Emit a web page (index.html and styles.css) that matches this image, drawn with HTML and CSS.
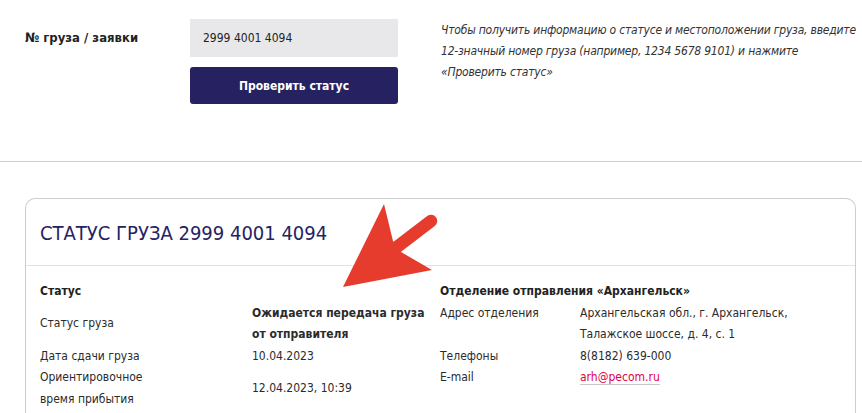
FILE: index.html
```html
<!DOCTYPE html>
<html lang="ru">
<head>
<meta charset="utf-8">
<link rel="stylesheet" href="styles.css">
</head>
<body>
<section class="search">
  <div class="search-label">№ груза / заявки</div>
  <div class="search-form">
    <div class="search-input">2999 4001 4094</div>
    <button class="search-btn">Проверить статус</button>
  </div>
  <p class="search-help">Чтобы получить информацию о статусе и местоположении груза, введите 12-значный номер груза (например, 1234 5678 9101) и нажмите «Проверить статус»</p>
</section>
<hr class="divider">
<section class="card">
  <h2 class="card-title">СТАТУС ГРУЗА 2999 4001 4094</h2>
  <div class="card-body">
    <div class="col col-status">
      <div class="col-head">Статус</div>
      <div class="row"><div class="key">Статус груза</div><div class="val val-bold">Ожидается передача груза от отправителя</div></div>
      <div class="row"><div class="key">Дата сдачи груза</div><div class="val">10.04.2023</div></div>
      <div class="row"><div class="key"><span class="key-text">Ориентировочное время прибытия</span></div><div class="val">12.04.2023, 10:39</div></div>
    </div>
    <div class="col col-office">
      <div class="col-head">Отделение отправления «Архангельск»</div>
      <div class="row"><div class="key">Адрес отделения</div><div class="val">Архангельская обл., г. Архангельск, Талажское шоссе, д. 4, с. 1</div></div>
      <div class="row"><div class="key">Телефоны</div><div class="val">8(8182) 639-000</div></div>
      <div class="row"><div class="key">E-mail</div><div class="val"><a class="mail" href="#">arh@pecom.ru</a></div></div>
    </div>
  </div>
  <svg class="arrow" width="120" height="100" viewBox="0 0 120 100">
    <path d="M110 20 L72 49" stroke="#e53c2e" stroke-width="12.5" stroke-linecap="round"/>
    <polygon points="63,3 72,40 80,51 111,69 22,86" fill="#e53c2e"/>
  </svg>
</section>
</body>
</html>
```

FILE: styles.css
```css
html, body { margin: 0; padding: 0; background: #fff; }
body {
  font-family: "DejaVu Sans Condensed", "DejaVu Sans", sans-serif;
  font-size: 12px;
  color: #2b2b2b;
  width: 862px;
  height: 413px;
  overflow: hidden;
}
.search {
  display: flex;
  padding: 19px 0 0 25px;
  box-sizing: border-box;
  height: 161px;
}
.search-label {
  width: 165px;
  font-weight: bold;
  font-size: 13px;
  line-height: 38px;
  color: #222;
}
.search-form {
  width: 208px;
  display: flex;
  flex-direction: column;
  gap: 10px;
}
.search-input {
  height: 38px;
  line-height: 38px;
  background: #e8e8ea;
  padding-left: 13px;
  font-size: 12px;
  color: #222;
}
.search-btn {
  height: 37px;
  border: 0;
  border-radius: 3px;
  background: #262262;
  color: #fff;
  font-family: inherit;
  font-weight: bold;
  font-size: 12px;
  padding: 0;
}
.search-help {
  margin: 0 0 0 43px;
  padding-top: 1px;
  width: 421px;
  font-style: italic;
  font-size: 12px;
  letter-spacing: -0.2px;
  line-height: 21px;
  color: #333;
}
.divider {
  margin: 0;
  border: 0;
  border-top: 1px solid #cdcdcd;
}
.card {
  position: relative;
  margin: 36px 6px 0 25px;
  border: 1px solid #cdcdcd;
  border-bottom: 0;
  border-radius: 10px 10px 0 0;
  height: 220px;
}
.card-title {
  margin: 0;
  padding: 0 14px;
  height: 66px;
  line-height: 68px;
  font-weight: normal;
  font-size: 20px;
  color: #262262;
  border-bottom: 1px solid #e3e3e3;
}
.card-body {
  display: flex;
  padding: 15px 14px 0;
}
.col-head {
  font-weight: bold;
  line-height: 21.6px;
  font-size: 12px;
  color: #222;
}
.row { display: flex; align-items: center; line-height: 21.6px; }
.col-office .row { align-items: flex-start; }
.col-status { width: 400px; }
.col-status .key { width: 212px; }
.key-text { display: block; width: 110px; }
.col-status .val { width: 180px; }
.col-office .key { width: 140px; }
.col-office .val { width: 230px; }
.val-bold { font-weight: bold; }
.mail { color: #e2004b; text-decoration: none; border-bottom: 1px solid #c8c8c8; }
.arrow { position: absolute; left: 295px; top: 2px; }
```
